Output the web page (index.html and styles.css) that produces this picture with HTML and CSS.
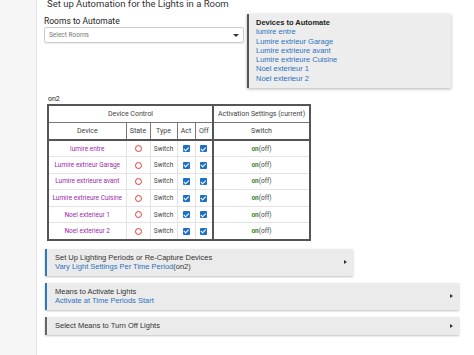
FILE: index.html
```html
<!DOCTYPE html>
<html lang="en">
<head>
  <meta charset="UTF-8" />
  <meta name="viewport" content="width=device-width, initial-scale=1.0"/>
  <title>Set up Automation for the Lights in a Room</title>
  <link rel="stylesheet" href="styles.css">
</head>
<body>

  <div class="layout">
    <!-- Left rail -->
    <div class="rail"></div>

    <div class="main">
      <div class="top">
        <div class="top__left">
          <div class="page-title">Set up Automation for the Lights in a Room</div>
          <label class="field-label" for="rooms">Rooms to Automate</label>
          <div class="select" id="rooms">
            <span>Select Rooms</span>
            <span class="select__arrow"></span>
          </div>
        </div>

        <!-- Devices summary -->
        <div class="devices">
          <div class="devices__title">Devices to Automate</div>
          <div class="devices__item">lumire entre</div>
          <div class="devices__item">Lumire extrieur Garage</div>
          <div class="devices__item">Lumire extrieure avant</div>
          <div class="devices__item">Lumire extrieure Cuisine</div>
          <div class="devices__item">Noel exterieur 1</div>
          <div class="devices__item">Noel exterieur 2</div>
        </div>
      </div>

      <div class="table-name">on2</div>
      <table class="dev-table">
        <tr class="head">
          <th colspan="5" class="sep">Device Control</th>
          <th>Activation Settings (current)</th>
        </tr>
        <tr class="head head--sub">
          <th class="c-dev">Device</th>
          <th class="c-state">State</th>
          <th class="c-type">Type</th>
          <th class="c-act">Act</th>
          <th class="c-off sep">Off</th>
          <th class="c-sw">Switch</th>
        </tr>
        <tr>
          <td class="dev">lumire entre</td>
          <td><span class="ring"></span></td>
          <td>Switch</td>
          <td><span class="check"></span></td>
          <td class="sep"><span class="check"></span></td>
          <td><b class="on">on</b>(off)</td>
        </tr>
        <tr>
          <td class="dev">Lumire extrieur Garage</td>
          <td><span class="ring"></span></td>
          <td>Switch</td>
          <td><span class="check"></span></td>
          <td class="sep"><span class="check"></span></td>
          <td><b class="on">on</b>(off)</td>
        </tr>
        <tr>
          <td class="dev">Lumire extrieure avant</td>
          <td><span class="ring"></span></td>
          <td>Switch</td>
          <td><span class="check"></span></td>
          <td class="sep"><span class="check"></span></td>
          <td><b class="on">on</b>(off)</td>
        </tr>
        <tr>
          <td class="dev">Lumire extrieure Cuisine</td>
          <td><span class="ring"></span></td>
          <td>Switch</td>
          <td><span class="check"></span></td>
          <td class="sep"><span class="check"></span></td>
          <td><b class="on">on</b>(off)</td>
        </tr>
        <tr>
          <td class="dev">Noel exterieur 1</td>
          <td><span class="ring"></span></td>
          <td>Switch</td>
          <td><span class="check"></span></td>
          <td class="sep"><span class="check"></span></td>
          <td><b class="on">on</b>(off)</td>
        </tr>
        <tr>
          <td class="dev">Noel exterieur 2</td>
          <td><span class="ring"></span></td>
          <td>Switch</td>
          <td><span class="check"></span></td>
          <td class="sep"><span class="check"></span></td>
          <td><b class="on">on</b>(off)</td>
        </tr>
      </table>

      <!-- Sub pages -->
      <div class="page-link page-link--short">
        <div>
          <div class="page-link__title">Set Up Lighting Periods or Re-Capture Devices</div>
          <div class="page-link__desc"><span class="blue">Vary Light Settings Per Time Period</span>(on2)</div>
        </div>
        <span class="page-link__arrow"></span>
      </div>

      <div class="page-link">
        <div>
          <div class="page-link__title">Means to Activate Lights</div>
          <div class="page-link__desc"><span class="blue">Activate at Time Periods Start</span></div>
        </div>
        <span class="page-link__arrow"></span>
      </div>

      <div class="page-link page-link--plain">
        <div>
          <div class="page-link__title">Select Means to Turn Off Lights</div>
        </div>
        <span class="page-link__arrow"></span>
      </div>
    </div>
  </div>

</body>
</html>
```

FILE: styles.css
```css
* {
  box-sizing: border-box;
  margin: 0;
  padding: 0;
}

body {
  font-family: Roboto, "Liberation Sans", Arial, sans-serif;
  background-color: #fff;
  color: #222;
  height: 355px;
  overflow: hidden;
}

.layout {
  display: flex;
  height: 100%;
}

.rail {
  width: 37px;
  flex-shrink: 0;
  background-color: #f6f6f6;
  border-right: 1px solid #e4e4e4;
}

.main {
  flex: 1;
  padding-left: 7px;
  display: flex;
  flex-direction: column;
}

.top {
  display: flex;
  gap: 3px;
  margin-top: -2px;
}

.top__left {
  width: 200px;
}

.page-title {
  font-size: 9.5px;
  line-height: 12px;
  padding-left: 3px;
  color: #333;
}

.field-label {
  display: block;
  margin-top: 6px;
  font-size: 8.5px;
  line-height: 10px;
  color: #222;
}

.select {
  margin-top: 1px;
  height: 16px;
  border: 1px solid #ccc;
  border-radius: 2px;
  box-shadow: 0 1px 1px rgba(0, 0, 0, 0.08);
  display: flex;
  align-items: center;
  justify-content: space-between;
  padding: 0 4px 0 4px;
  font-size: 6.5px;
  color: #777;
}

.select__arrow {
  width: 0;
  height: 0;
  border-left: 3px solid transparent;
  border-right: 3px solid transparent;
  border-top: 3px solid #333;
}

.devices {
  margin-top: 16px;
  width: 204px;
  height: 74px;
  background-color: #ededed;
  border-left: 2px solid #555;
  box-shadow: 0 1px 3px rgba(0, 0, 0, 0.3);
  padding: 4px 7px;
  font-family: "Liberation Sans", Arial, sans-serif;
  font-size: 7.5px;
  line-height: 9.3px;
}

.devices__title {
  font-weight: bold;
  color: #222;
}

.devices__item {
  color: #2e73c0;
}

.table-name {
  margin-top: 7px;
  padding-left: 4px;
  font-size: 7px;
  line-height: 9px;
  color: #222;
}

.dev-table {
  margin-left: 3px;
  width: 264px;
  border-collapse: collapse;
  border: 2px solid #555;
  font-size: 6.5px;
  color: #444;
}

.dev-table th {
  font-weight: normal;
  height: 17.5px;
  font-size: 7px;
  border: 1px solid #777;
}

.dev-table td {
  height: 16.6px;
  text-align: center;
  border-top: 1px solid #e3e3e3;
  border-left: 1px solid #e3e3e3;
}

.dev-table .head--sub th {
  border-bottom: 2px solid #555;
}

.dev-table .sep {
  border-right: 2px solid #555;
}

.c-dev { width: 78px; }
.c-state { width: 24px; }
.c-type { width: 27px; }
.c-act { width: 18px; }
.c-off { width: 18px; }

.dev-table .dev {
  color: #9c27a8;
}

.ring {
  display: inline-block;
  width: 7px;
  height: 7px;
  border: 1.3px solid #e53935;
  border-radius: 50%;
  vertical-align: middle;
}

.check {
  display: inline-block;
  position: relative;
  width: 7px;
  height: 7px;
  background-color: #1f6fc6;
  border-radius: 1px;
  vertical-align: middle;
}

.check::after {
  content: "";
  position: absolute;
  left: 2.2px;
  top: 0.6px;
  width: 1.6px;
  height: 3.6px;
  border-right: 1.2px solid #fff;
  border-bottom: 1.2px solid #fff;
  transform: rotate(45deg);
}

.on {
  color: #2e8b2e;
}

.page-link {
  display: flex;
  align-items: center;
  justify-content: space-between;
  width: 414px;
  min-height: 27px;
  margin-left: 1px;
  margin-top: 7px;
  padding: 0 6px 0 8px;
  background-color: #ebebeb;
  border-left: 2px solid #2f78c4;
  box-shadow: 0 1px 2px rgba(0, 0, 0, 0.25);
  font-family: "Liberation Sans", Arial, sans-serif;
  font-size: 7.5px;
  line-height: 9px;
  color: #333;
}

.page-link--short {
  width: 308px;
  margin-top: 8px;
}

.page-link--plain {
  min-height: 18px;
  border-left-color: #666;
}

.blue {
  color: #2e73c0;
}

.page-link__arrow {
  width: 0;
  height: 0;
  border-top: 2px solid transparent;
  border-bottom: 2px solid transparent;
  border-left: 3px solid #333;
}
```
